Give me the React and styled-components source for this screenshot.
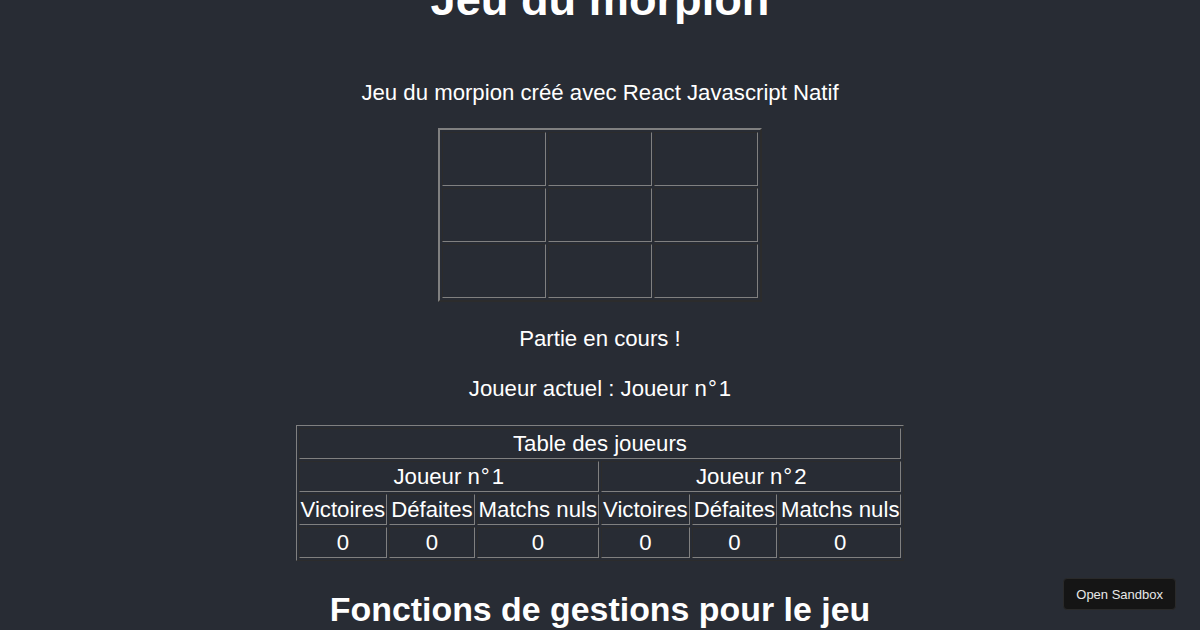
import React from 'react';
import styled, { createGlobalStyle } from 'styled-components';

const GlobalStyle = createGlobalStyle`
  html, body {
    margin: 0;
    padding: 0;
    background: #282c34;
  }
  body {
    font-family: "Liberation Sans", Arial, sans-serif;
    overflow: hidden;
  }
`;

const Page = styled.div`
  min-height: 100vh;
  display: flex;
  flex-direction: column;
  align-items: center;
  font-size: 22.2px;
  line-height: 27px;
  color: white;
  text-align: center;
`;

const Title = styled.h1`
  font-size: 45.2px;
  line-height: normal;
  font-weight: bold;
  margin: -25.6px 0 0;
`;

const Text = styled.p`
  margin: ${p => p.$top || '23px'} 0 ${p => p.$bottom || '23px'};
`;

const Degree = styled.span`
  margin: 0 2px 0 1px;
`;

const Board = styled.table`
  border: 2px outset gray;
  border-spacing: 2px;
`;

const Square = styled.td`
  width: 100px;
  height: 50px;
  padding: 1px;
  border: 1px inset gray;
`;

const Stats = styled.table`
  border: 1px outset gray;
  border-spacing: 2px;
  font-size: inherit;
  line-height: inherit;
  color: white;
`;

const Cell = styled.td`
  padding: 1px;
  border: 1px inset gray;
  white-space: nowrap;
`;

const SubTitle = styled.h2`
  font-size: 33.9px;
  line-height: normal;
  font-weight: bold;
  margin: 29px 0;
`;

const SandboxButton = styled.button`
  position: fixed;
  right: 24px;
  bottom: 20px;
  height: 32px;
  padding: 0 12px;
  border: 1px solid #2a2a2a;
  border-radius: 4px;
  background: #151515;
  color: #e8e8e8;
  font-family: "Liberation Sans", Arial, sans-serif;
  font-size: 13px;
`;

const labels = ['Victoires', 'Défaites', 'Matchs nuls'];

const Player = ({ n }) => (
  <>Joueur n<Degree>°</Degree>{n}</>
);

export default function App() {
  const rows = [0, 1, 2];
  return (
    <>
      <GlobalStyle />
      <Page>
        <Title>Jeu du morpion</Title>
        <Text $top="53px" $bottom="22px">Jeu du morpion créé avec React Javascript Natif</Text>
        <Board>
          <tbody>
            {rows.map(r => (
              <tr key={r}>
                {rows.map(c => <Square key={c} />)}
              </tr>
            ))}
          </tbody>
        </Board>
        <Text>Partie en cours !</Text>
        <Text $top="0">Joueur actuel : <Player n={1} /></Text>
        <Stats>
          <tbody>
            <tr>
              <Cell colSpan={6}>Table des joueurs</Cell>
            </tr>
            <tr>
              <Cell colSpan={3}><Player n={1} /></Cell>
              <Cell colSpan={3}><Player n={2} /></Cell>
            </tr>
            <tr>
              {[...labels, ...labels].map((l, i) => <Cell key={i}>{l}</Cell>)}
            </tr>
            <tr>
              {[0, 0, 0, 0, 0, 0].map((v, i) => <Cell key={i}>{v}</Cell>)}
            </tr>
          </tbody>
        </Stats>
        <SubTitle>Fonctions de gestions pour le jeu</SubTitle>
      </Page>
      <SandboxButton>Open Sandbox</SandboxButton>
    </>
  );
}
